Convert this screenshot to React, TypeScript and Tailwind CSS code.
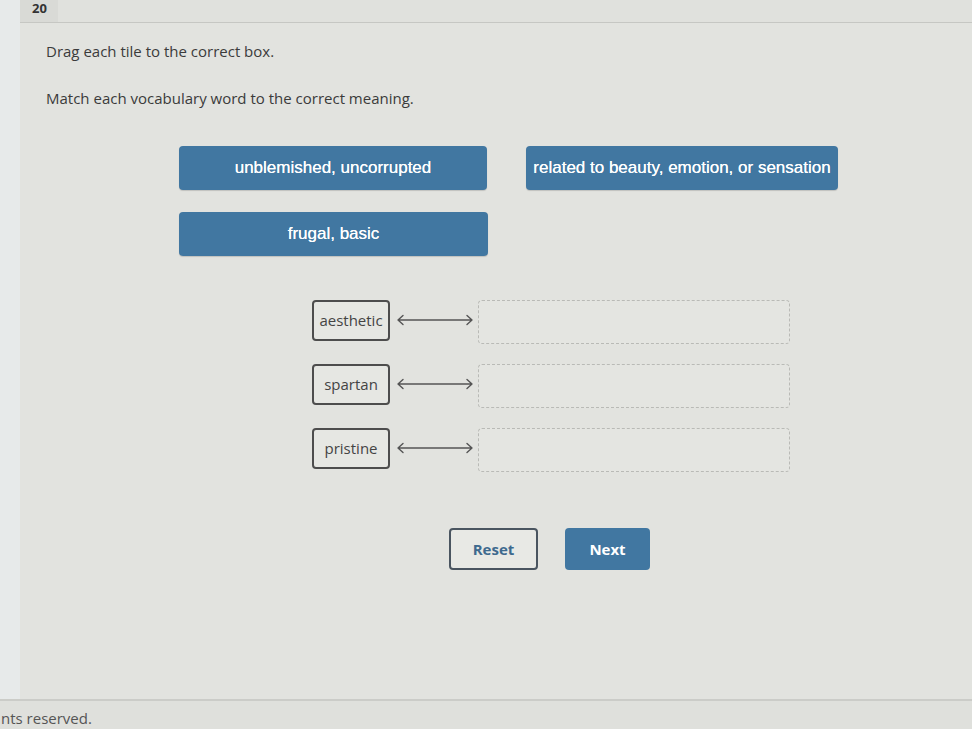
import React from 'react';

const font = { fontFamily: '"Open Sans", "Liberation Sans", sans-serif' };
const tileFont = { fontFamily: '"Liberation Sans", Arial, sans-serif' };

function Arrow() {
    return (
        <svg width="78" height="12" viewBox="0 0 78 12" className="shrink-0">
            <path d="M2 6H76M7 1.5L2 6L7 10.5M71 1.5L76 6L71 10.5" fill="none" stroke="#555" strokeWidth="1.4" strokeLinecap="round" strokeLinejoin="round" />
        </svg>
    );
}

function Tile({ label, width }: { label: string; width: string }) {
    return (
        <div
            className={`${width} h-[44px] rounded-[4px] bg-[#4177a1] text-white text-[17px] flex items-center justify-center shadow-[0_1px_1px_rgba(0,0,0,0.15)] [text-shadow:0_0_0.5px_#fff]`}
            style={tileFont}
        >
            {label}
        </div>
    );
}

function MatchRow({ word }: { word: string }) {
    return (
        <div className="flex items-start">
            <div className="w-[78px] h-[41px] border-2 border-[#4d4d4d] rounded-[4px] flex items-center justify-center text-[15px] text-[#444] bg-[#e6e7e3]">
                {word}
            </div>
            <div className="ml-[6px] mr-[4px] pt-[14px]">
                <Arrow />
            </div>
            <div className="w-[312px] h-[44px] border border-dashed border-[#b9bab6] rounded-[4px] bg-[#e4e5e1]" />
        </div>
    );
}

export default function App() {
    return (
        <div className="w-[972px] h-[729px] overflow-hidden bg-[#e2e3df] flex flex-col text-[#3a3a3a]" style={font}>
            <div className="flex h-[700px]">
                <div className="w-[20px] bg-[#e7eaea]" />
                <div className="flex-1 flex flex-col">
                    {/* Header */}
                    <div className="h-[23px] border-b border-[#c6c7c3] flex bg-[#e0e1dd]">
                        <div className="w-[38px] bg-[#d9dad6] text-[13px] font-bold text-[#333] pl-[12px] leading-[16px]">20</div>
                    </div>

                    <div className="pl-[26px] pt-[17px] text-[15px] text-[#3b3b3b]">Drag each tile to the correct box.</div>
                    <div className="pl-[26px] pt-[24px] text-[15px] text-[#3b3b3b]">Match each vocabulary word to the correct meaning.</div>

                    {/* Tiles */}
                    <div className="pl-[159px] pt-[37px] flex flex-col gap-[22px]">
                        <div className="flex gap-[39px]">
                            <Tile label="unblemished, uncorrupted" width="w-[308px]" />
                            <Tile label="related to beauty, emotion, or sensation" width="w-[312px]" />
                        </div>
                        <Tile label="frugal, basic" width="w-[309px]" />
                    </div>

                    {/* Matching */}
                    <div className="pl-[292px] pt-[44px] flex flex-col gap-[20px]">
                        <MatchRow word="aesthetic" />
                        <MatchRow word="spartan" />
                        <MatchRow word="pristine" />
                    </div>

                    {/* Buttons */}
                    <div className="pl-[429px] pt-[56px] flex gap-[27px]">
                        <button className="w-[89px] h-[42px] border-2 border-[#4a5560] rounded-[4px] text-[15px] font-bold text-[#3e6a8e] bg-[#e8e9e5]">
                            Reset
                        </button>
                        <button className="w-[85px] h-[42px] rounded-[4px] text-[15px] font-bold text-white bg-[#4177a1]">
                            Next
                        </button>
                    </div>
                </div>
            </div>
            <div className="border-t-2 border-[#cbccc8] flex-1 bg-[#dfe0dc] text-[15px] text-[#555] pt-[6px] pl-[1px]">
                nts reserved.
            </div>
        </div>
    );
}
